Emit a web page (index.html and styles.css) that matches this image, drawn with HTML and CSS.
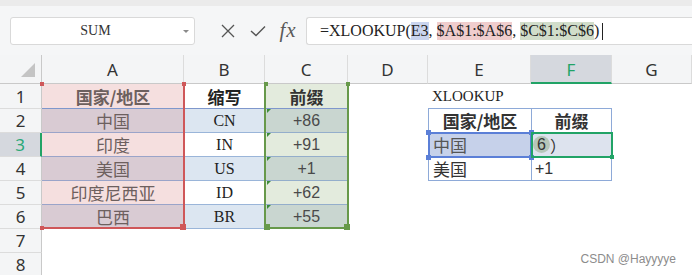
FILE: index.html
```html
<!DOCTYPE html>
<html lang="zh-CN">
<head>
  <meta charset="UTF-8" />
  <title>XLOOKUP</title>
  <link rel="stylesheet" href="styles.css">
</head>
<body>

  <div class="toolbar">
    <div class="name-box">SUM<span class="drop"></span></div>
    <div class="icons">
      <div class="icon">
        <svg width="14" height="14" viewBox="0 0 14 14"><path d="M1 1L13 13M13 1L1 13" stroke="#555" stroke-width="1.3" fill="none"/></svg>
      </div>
      <div class="icon">
        <svg width="16" height="12" viewBox="0 0 16 12"><path d="M1 6L6 10.5L15 1.5" stroke="#555" stroke-width="1.4" fill="none"/></svg>
      </div>
      <div class="icon fx">fx</div>
    </div>
    <div class="formula">=XLOOKUP(<span class="ref-e">E3</span>, <span class="ref-a">$A$1:$A$6</span>, <span class="ref-c">$C$1:$C$6</span>)<span class="caret"></span></div>
  </div>

  <div class="sheet">
    <div class="corner">
      <svg width="41" height="28"><polygon points="35,8 35,22 21,22" fill="#c4c4c4"/></svg>
    </div>
    <div class="ch">A</div>
    <div class="ch">B</div>
    <div class="ch">C</div>
    <div class="ch">D</div>
    <div class="ch">E</div>
    <div class="ch on">F</div>
    <div class="ch">G</div>

    <!-- row 1 -->
    <div class="rh">1</div>
    <div class="cell a hd top">国家/地区</div>
    <div class="cell b hd top">缩写</div>
    <div class="cell p hd top">前缀</div>
    <div class="cell"></div>
    <div class="cell label tbl-top">XLOOKUP</div>
    <div class="cell tbl-top"></div>
    <div class="cell"></div>

    <!-- row 2 -->
    <div class="rh">2</div>
    <div class="cell a band">中国</div>
    <div class="cell b band">CN</div>
    <div class="cell p band tri">+86</div>
    <div class="cell"></div>
    <div class="cell t te hd">国家/地区</div>
    <div class="cell t tf hd">前缀</div>
    <div class="cell"></div>

    <!-- row 3 -->
    <div class="rh on">3</div>
    <div class="cell a">印度</div>
    <div class="cell b">IN</div>
    <div class="cell p tri">+91</div>
    <div class="cell"></div>
    <div class="cell t te left picked">中国</div>
    <div class="cell t tf left editing"><span class="bub">6</span>）</div>
    <div class="cell"></div>

    <!-- row 4 -->
    <div class="rh">4</div>
    <div class="cell a band">美国</div>
    <div class="cell b band">US</div>
    <div class="cell p band tri">+1</div>
    <div class="cell"></div>
    <div class="cell t te left">美国</div>
    <div class="cell t tf left num">+1</div>
    <div class="cell"></div>

    <!-- row 5 -->
    <div class="rh">5</div>
    <div class="cell a">印度尼西亚</div>
    <div class="cell b">ID</div>
    <div class="cell p tri">+62</div>
    <div class="cell rest"></div>

    <!-- row 6 -->
    <div class="rh">6</div>
    <div class="cell a band">巴西</div>
    <div class="cell b band">BR</div>
    <div class="cell p band tri">+55</div>
    <div class="cell rest"></div>

    <div class="rh">7</div>
    <div class="cell all"></div>
    <div class="rh">8</div>
    <div class="cell all"></div>

    <!-- reference ranges and selection drawn over the grid -->
    <div class="rng rng-a">
      <span class="h tl"></span><span class="h tr"></span><span class="h bl"></span><span class="h br big"></span>
    </div>
    <div class="rng rng-c">
      <span class="h tl"></span><span class="h tr"></span><span class="h bl big"></span><span class="h br big"></span>
    </div>
    <div class="rng sel-e">
      <span class="h tl"></span><span class="h tr"></span><span class="h bl"></span><span class="h br"></span>
    </div>
    <div class="rng act-f"><span class="h br"></span></div>
  </div>

  <div class="wm">CSDN @Hayyyye</div>

</body>
</html>
```

FILE: styles.css
```css
* {
  box-sizing: border-box;
}

body {
  margin: 0;
  width: 692px;
  height: 275px;
  overflow: hidden;
  position: relative;
  background: #fff;
  font-family: "Noto Sans CJK SC", "Noto Sans", sans-serif;
  color: #333;
}

/* formula bar */
.toolbar {
  height: 55px;
  background: #f5f6f7;
  border-top: 6px solid #ebebeb;
  padding-top: 11px;
  display: flex;
  align-items: flex-start;
}

.name-box {
  margin-left: 10px;
  width: 185px;
  height: 28px;
  border: 1px solid #d9d9d9;
  border-radius: 3px;
  background: #fff;
  position: relative;
  display: flex;
  align-items: center;
  justify-content: center;
  padding-right: 14px;
  font: 14px "Liberation Serif", serif;
  color: #333;
}

.drop {
  position: absolute;
  right: 5px;
  top: 12px;
  border-left: 3px solid transparent;
  border-right: 3px solid transparent;
  border-top: 3px solid #8a8a8a;
}

.icons {
  display: flex;
  margin-left: 18px;
  height: 28px;
  align-items: center;
}

.icon {
  width: 30px;
  display: flex;
  justify-content: center;
  align-items: center;
}

.fx {
  font: italic 21px "Liberation Serif", serif;
  color: #5a5a5a;
  letter-spacing: 1px;
  margin-top: -2px;
}

.formula {
  margin-left: 3px;
  flex: 1;
  height: 28px;
  border: 1px solid #d9d9d9;
  border-right: none;
  border-radius: 3px 0 0 3px;
  background: #fff;
  padding-left: 13px;
  display: flex;
  align-items: center;
  white-space: pre;
  font: 16px "Liberation Serif", serif;
  color: #222;
}

.ref-e { background: #c9d4ee; }
.ref-a { background: #f0cdcd; }
.ref-c { background: #d1ddca; }

.caret {
  display: inline-block;
  width: 1px;
  height: 17px;
  margin-left: 3px;
  background: #222;
}

/* grid */
.sheet {
  position: relative;
  display: grid;
  grid-template-columns: 42px 142px 81px 83px 80px 103px 81px 1fr;
  grid-template-rows: 29px 25px repeat(7, 24px);
}

.corner {
  background: #f4f5f6;
  border-right: 1px solid #c9c9c9;
  border-bottom: 1px solid #c9c9c9;
}

.corner svg {
  display: block;
}

.ch {
  background: #f4f5f6;
  border-right: 1px solid #dcdcdc;
  border-bottom: 1px solid #c9c9c9;
  display: flex;
  align-items: center;
  justify-content: center;
  font: 17px "Noto Sans", sans-serif;
  color: #333;
  padding-top: 1px;
}

.ch.on {
  background: #d5d8de;
  color: #21a366;
  border-bottom: 2px solid #21a366;
}

.rh {
  background: #f4f5f6;
  border-right: 1px solid #c9c9c9;
  border-bottom: 1px solid #dcdcdc;
  display: flex;
  align-items: center;
  justify-content: center;
  font: 17px "Noto Sans", sans-serif;
  color: #333;
}

.rh.on {
  background: #d5d8de;
  color: #2aa877;
  border-right: 2px solid #21a366;
}

.cell {
  position: relative;
  display: flex;
  align-items: center;
  justify-content: center;
  white-space: nowrap;
  overflow: hidden;
  font-size: 17px;
}

.cell.rest { grid-column: 5 / -1; }
.cell.all { grid-column: 2 / -1; }

.hd {
  font-weight: 700;
  color: #333;
}

/* column A: country */
.a {
  background: #f5dfdf;
  color: #6d605e;
  border-bottom: 1px solid #9aa4c9;
}
.a.band { background: #d9cbd3; }

/* column B: code */
.b {
  background: #fff;
  font-family: "Liberation Serif", serif;
  font-size: 16px;
  color: #222;
  border-bottom: 1px solid #9ab5d9;
}
.b.band { background: #dce6f1; }
.b.hd { font-family: "Noto Sans CJK SC", sans-serif; font-size: 17px; }

/* column C: prefix */
.p {
  background: #e3ebdd;
  font-family: "Liberation Sans", sans-serif;
  font-size: 16px;
  color: #4a4a4a;
  border-bottom: 1px solid #94aecb;
}
.p.band { background: #c9d6d0; }
.p.hd { font-family: "Noto Sans CJK SC", sans-serif; font-size: 17px; color: #333; }

.top { border-bottom-color: #7f97cc; }

.tri::before {
  content: "";
  position: absolute;
  left: 2px;
  top: 0;
  border-top: 4px solid #3d8b3d;
  border-right: 4px solid transparent;
}

/* lookup table E2:F4 */
.label {
  justify-content: flex-start;
  padding-left: 4px;
  font: 15px "Liberation Serif", serif;
  color: #222;
}

.tbl-top { border-bottom: 1px solid #8eaad8; }

.t {
  border-bottom: 1px solid #8eaad8;
  border-left: 1px solid #8eaad8;
  color: #333;
}
.t.tf { border-right: 1px solid #8eaad8; }

.t.left {
  justify-content: flex-start;
  padding-left: 4px;
}

.t.num {
  font: 16px "Liberation Sans", sans-serif;
  padding-left: 3px;
}

.picked {
  background: #c6d1ea;
  color: #555;
}

.editing {
  background: #dde3ee;
  padding-left: 1px !important;
  font-size: 16px;
}

.bub {
  display: inline-block;
  width: 17px;
  height: 17px;
  border-radius: 50%;
  background: #b6c6b9;
  text-align: center;
  line-height: 17px;
  font-family: "Liberation Sans", sans-serif;
}

/* range outlines */
.rng {
  position: absolute;
  pointer-events: none;
}

.rng-a {
  left: 42px;
  top: 29px;
  width: 143px;
  height: 145px;
  border-right: 2px solid #cf5759;
  border-bottom: 2px solid #cf5759;
}

.rng-c {
  left: 264px;
  top: 29px;
  width: 85px;
  height: 145px;
  border-left: 2px solid #67994a;
  border-right: 2px solid #67994a;
  border-bottom: 2px solid #67994a;
}

.sel-e {
  left: 428px;
  top: 77px;
  width: 104px;
  height: 26px;
  border: 2px solid #5b7fd7;
}

.act-f {
  left: 531px;
  top: 77px;
  width: 82px;
  height: 26px;
  border: 2px solid #21a366;
}

.h {
  position: absolute;
  width: 4px;
  height: 4px;
}

.rng-a .h { background: #cf5759; }
.rng-c .h { background: #67994a; }
.sel-e .h { background: #5b7fd7; width: 5px; height: 5px; }
.act-f .h { background: #21a366; }

.tl { left: -2px; top: -2px; }
.tr { right: -3px; top: -2px; }
.bl { left: -2px; bottom: -3px; }
.br { right: -3px; bottom: -3px; }

.h.big {
  width: 6px;
  height: 6px;
}

.sel-e .tl, .sel-e .bl { left: -4px; }
.sel-e .tr, .sel-e .br { right: -4px; }
.sel-e .tl, .sel-e .tr { top: -4px; }
.sel-e .bl, .sel-e .br { bottom: -4px; }

.wm {
  position: absolute;
  right: 16px;
  bottom: 9px;
  font: 12px "Liberation Sans", sans-serif;
  color: #8c8c8c;
}
```
